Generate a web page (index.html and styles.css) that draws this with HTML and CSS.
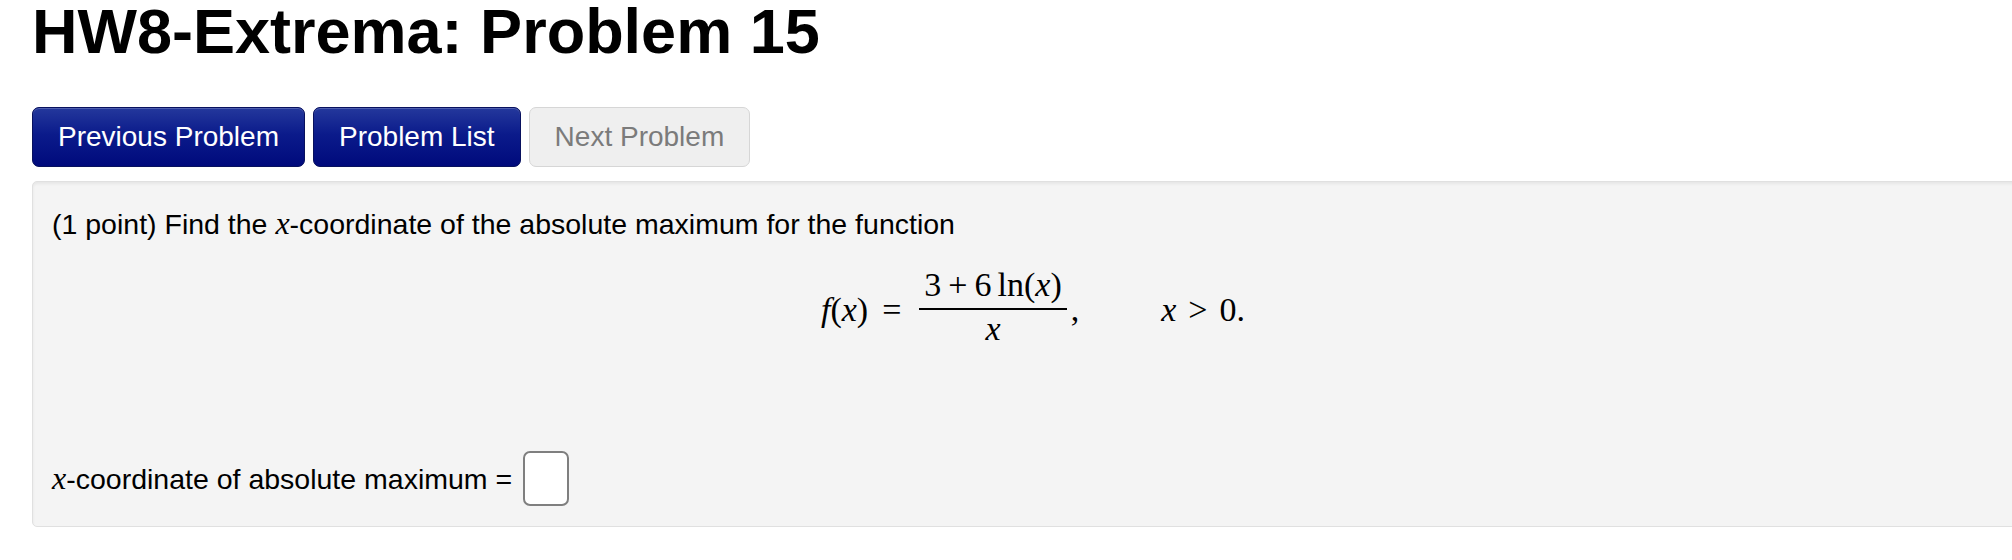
FILE: index.html
```html
<!DOCTYPE html>
<html lang="en">
<head>
<meta charset="utf-8">
<title>HW8-Extrema: Problem 15</title>
<link rel="stylesheet" href="styles.css">
</head>
<body>
<div class="page">
  <h1 class="title">HW8-Extrema: Problem 15</h1>
  <div class="nav">
    <a class="btn btn-primary">Previous Problem</a>
    <a class="btn btn-primary">Problem List</a>
    <span class="btn btn-disabled">Next Problem</span>
  </div>
  <div class="well">
    <p class="intro">(1 point) Find the <span class="mi-inline">x</span>-coordinate of the absolute maximum for the function</p>
    <div class="display">
      <span class="side"><span class="mi">f</span>(<span class="mi">x</span>)</span>
      <span class="side eq">=</span>
      <span class="frac">
        <span class="num">3<span class="bin">+</span>6<span class="thin"></span>ln(<span class="mi">x</span>)</span>
        <span class="bar"></span>
        <span class="den"><span class="mi">x</span></span>
      </span>
      <span class="side comma">,</span>
      <span class="side cond"><span class="mi">x</span><span class="rel">&gt;</span>0.</span>
    </div>
    <div class="answer-row">
      <span class="label"><span class="mi-inline">x</span>-coordinate of absolute maximum =</span>
      <input class="answer" type="text" aria-label="answer">
    </div>
  </div>
</div>
</body>
</html>
```

FILE: styles.css
```css
html, body {
  margin: 0;
  padding: 0;
  background: #ffffff;
  overflow: hidden;
}

body {
  font-family: "Liberation Sans", Arial, sans-serif;
  color: #000000;
}

.page {
  padding-left: 32px;
}

.title {
  margin: 0;
  font-size: 63px;
  line-height: 62px;
  font-weight: 700;
}

.nav {
  display: flex;
  gap: 8px;
  margin-top: 45px;
}

.btn {
  display: inline-block;
  font-size: 28px;
  line-height: 40px;
  padding: 9px 25px;
  border: 1px solid transparent;
  border-radius: 7px;
  text-decoration: none;
  white-space: nowrap;
}

.btn-primary {
  color: #ffffff;
  background-color: #0a1888;
  background-image: linear-gradient(to bottom, #24389c 0%, #0b1b8b 45%, #000a7c 100%);
  border-color: #08115e;
  box-shadow: inset 0 1px 0 rgba(255, 255, 255, 0.2);
}

.btn-disabled {
  color: #7b7b7b;
  background-color: #efefef;
  border-color: #d6d6d6;
}

.well {
  box-sizing: border-box;
  width: 1996px;
  margin-top: 14px;
  padding: 21px 19px 20px 19px;
  background-color: #f4f4f4;
  border: 1px solid #e0e0e0;
  border-radius: 5px;
  box-shadow: inset 0 2px 3px rgba(0, 0, 0, 0.06);
}

.intro {
  margin: 0;
  font-size: 28.5px;
  line-height: 40px;
}

.mi-inline {
  font-family: "Liberation Serif", "Times New Roman", serif;
  font-style: italic;
  font-size: 32px;
}

.display {
  display: flex;
  justify-content: center;
  align-items: center;
  margin-top: 23px;
  padding-left: 6px;
  font-family: "Liberation Serif", "Times New Roman", serif;
  font-size: 34px;
}

.mi {
  font-style: italic;
}

.side {
  line-height: 36px;
  padding-top: 5px;
}

.eq {
  margin: 0 18px 0 14px;
}

.frac {
  display: flex;
  flex-direction: column;
  align-items: center;
}

.num {
  line-height: 36px;
  padding: 0 5px 5px 5px;
}

.bin {
  margin: 0 7px;
}

.thin {
  display: inline-block;
  width: 6px;
}

.bar {
  align-self: stretch;
  height: 2px;
  background: #000000;
}

.den {
  line-height: 36px;
  padding-top: 1px;
}

.comma {
  margin-left: 4px;
}

.cond {
  margin-left: 82px;
}

.rel {
  margin: 0 12px;
}

.answer-row {
  display: flex;
  align-items: center;
  margin-top: 104px;
}

.label {
  font-size: 28.5px;
  line-height: 40px;
  white-space: pre;
}

.answer {
  box-sizing: border-box;
  width: 46px;
  height: 55px;
  margin: 0 0 0 11px;
  padding: 0;
  background: #ffffff;
  border: 2px solid #7f7f7f;
  border-radius: 7px;
}
```
